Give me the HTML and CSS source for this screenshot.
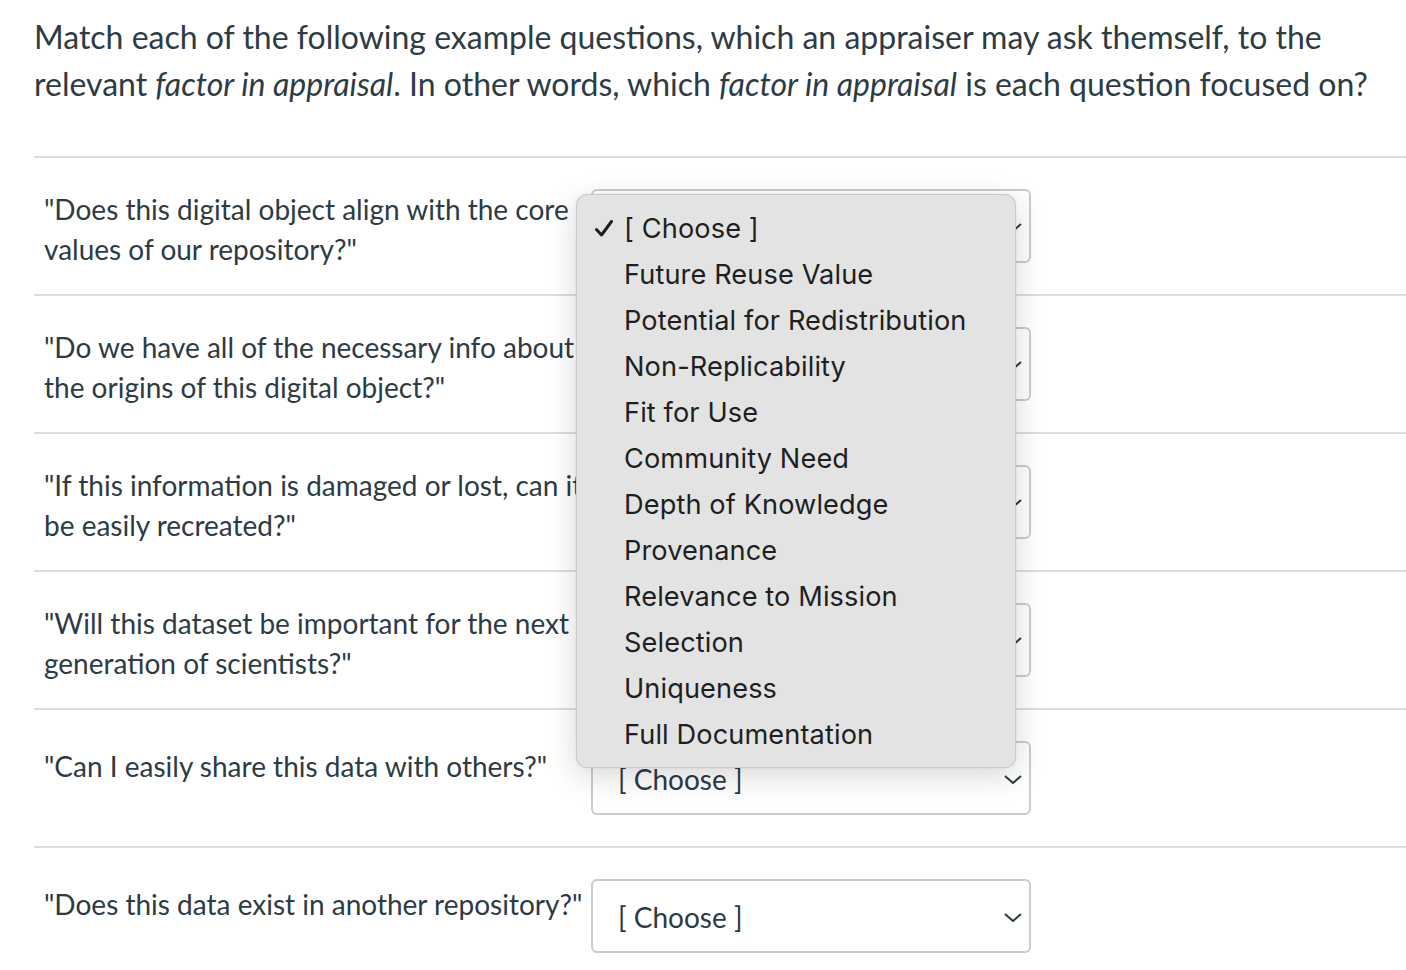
FILE: index.html
```html
<!DOCTYPE html>
<html lang="en">
<head>
<meta charset="utf-8">
<title>Matching question</title>
<link rel="stylesheet" href="styles.css">
</head>
<body>
<div class="question">
  <p class="prompt">Match each of the following example questions, which an appraiser may ask themself, to the relevant <em>factor in appraisal</em>. In other words, which <em>factor in appraisal</em> is each question focused on?</p>
  <div class="answers">
    <div class="row">
      <div class="left">"Does this digital object align with the core values of our repository?"</div>
      <div class="select-wrap">
        <div class="select"><span>[ Choose ]</span><svg class="chev" viewBox="0 0 18 9" width="18" height="9"><path d="M1 1 L9 8 L17 1" fill="none" stroke="#2d3b45" stroke-width="2"/></svg></div>
        <ul class="menu">
          <li class="checked"><svg class="check" viewBox="0 0 18 17" width="18" height="17"><path d="M1.5 9.5 L6.5 15 L16.5 1.5" fill="none" stroke="#1e1e1e" stroke-width="3" stroke-linecap="round" stroke-linejoin="round"/></svg>[ Choose ]</li>
          <li>Future Reuse Value</li>
          <li>Potential for Redistribution</li>
          <li>Non-Replicability</li>
          <li>Fit for Use</li>
          <li>Community Need</li>
          <li>Depth of Knowledge</li>
          <li>Provenance</li>
          <li>Relevance to Mission</li>
          <li>Selection</li>
          <li>Uniqueness</li>
          <li>Full Documentation</li>
        </ul>
      </div>
    </div>
    <div class="row">
      <div class="left">"Do we have all of the necessary info about the origins of this digital object?"</div>
      <div class="select-wrap">
        <div class="select"><span>[ Choose ]</span><svg class="chev" viewBox="0 0 18 9" width="18" height="9"><path d="M1 1 L9 8 L17 1" fill="none" stroke="#2d3b45" stroke-width="2"/></svg></div>
      </div>
    </div>
    <div class="row">
      <div class="left">"If this information is damaged or lost, can it be easily recreated?"</div>
      <div class="select-wrap">
        <div class="select"><span>[ Choose ]</span><svg class="chev" viewBox="0 0 18 9" width="18" height="9"><path d="M1 1 L9 8 L17 1" fill="none" stroke="#2d3b45" stroke-width="2"/></svg></div>
      </div>
    </div>
    <div class="row">
      <div class="left">"Will this dataset be important for the next generation of scientists?"</div>
      <div class="select-wrap">
        <div class="select"><span>[ Choose ]</span><svg class="chev" viewBox="0 0 18 9" width="18" height="9"><path d="M1 1 L9 8 L17 1" fill="none" stroke="#2d3b45" stroke-width="2"/></svg></div>
      </div>
    </div>
    <div class="row">
      <div class="left single">"Can I easily share this data with others?"</div>
      <div class="select-wrap">
        <div class="select"><span>[ Choose ]</span><svg class="chev" viewBox="0 0 18 9" width="18" height="9"><path d="M1 1 L9 8 L17 1" fill="none" stroke="#2d3b45" stroke-width="2"/></svg></div>
      </div>
    </div>
    <div class="row">
      <div class="left single">"Does this data exist in another repository?"</div>
      <div class="select-wrap">
        <div class="select"><span>[ Choose ]</span><svg class="chev" viewBox="0 0 18 9" width="18" height="9"><path d="M1 1 L9 8 L17 1" fill="none" stroke="#2d3b45" stroke-width="2"/></svg></div>
      </div>
    </div>
  </div>
</div>
</body>
</html>
```

FILE: styles.css
```css
html, body {
  margin: 0;
  padding: 0;
  background: #ffffff;
}

body {
  font-family: Lato, "Liberation Sans", sans-serif;
  color: #2d3b45;
  overflow: hidden;
}

.question {
  padding: 13px 0 0 34px;
}

.prompt {
  margin: 0 0 49px 0;
  font-size: 32px;
  line-height: 47px;
  padding-right: 10px;
}

.prompt em {
  font-style: italic;
}

.row {
  box-sizing: border-box;
  height: 138px;
  border-top: 2px solid #dcdcdc;
  padding-top: 31px;
  display: flex;
  align-items: flex-start;
}

.left {
  width: 546px;
  padding-left: 10px;
  font-size: 28px;
  line-height: 40px;
  margin-top: 0;
  flex: none;
}

.left.single {
  margin-top: 5px;
}

.select-wrap {
  position: relative;
  margin-left: 1px;
}

.select {
  box-sizing: border-box;
  width: 440px;
  height: 74px;
  border: 2px solid #c7cdd1;
  border-radius: 6px;
  background: #fff;
  display: flex;
  align-items: center;
  justify-content: space-between;
  padding: 0 7px 0 25px;
  font-size: 28px;
  position: relative;
}

.select span {
  margin-top: 2px;
}

.chev {
  display: block;
  margin-top: 2px;
}

.menu {
  position: absolute;
  left: -15px;
  top: 5px;
  width: 440px;
  box-sizing: border-box;
  margin: 0;
  padding: 11px 0 9px 0;
  list-style: none;
  background: #e3e3e3;
  border: 1px solid #c9c9c9;
  border-radius: 11px;
  box-shadow: 0 8px 30px rgba(0, 0, 0, 0.16), 0 0 2px rgba(0, 0, 0, 0.08);
  z-index: 10;
  font-family: Inter, "Noto Sans", sans-serif;
  color: #1f1f1f;
}

.menu li {
  height: 46px;
  line-height: 46px;
  font-size: 27.2px;
  padding-left: 47px;
  position: relative;
  letter-spacing: 0.1px;
}

.menu .check {
  position: absolute;
  left: 18px;
  top: 14px;
}
```
